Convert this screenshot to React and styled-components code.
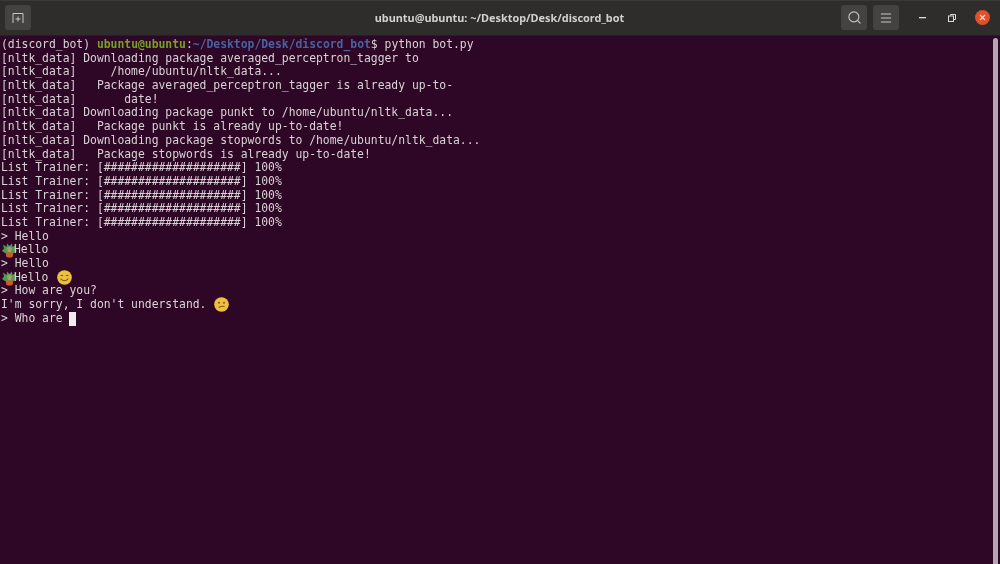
import React from "react";
import styled, { createGlobalStyle } from "styled-components";
import { Search, Menu, X } from "lucide-react";

const GlobalStyle = createGlobalStyle`
  html, body {
    margin: 0;
    padding: 0;
    height: 100%;
    overflow: hidden;
    background: #300a24;
  }
`;

const Window = styled.div`
  width: 1000px;
  height: 564px;
  display: flex;
  flex-direction: column;
  background: #2f0726;
  overflow: hidden;
`;

const TitleBar = styled.header`
  height: 36px;
  flex: none;
  box-sizing: border-box;
  display: grid;
  grid-template-columns: 1fr auto 1fr;
  align-items: center;
  padding: 0 10px 1px 5px;
  background: #2e2d2c;
  border-top: 1px solid #3a3938;
  border-bottom: 1px solid #232221;
  filter: blur(0.4px);
`;

const Side = styled.div`
  display: flex;
  align-items: center;
  justify-content: ${(p) => (p.$end ? "flex-end" : "flex-start")};
`;

const Title = styled.div`
  font-family: "Noto Sans", "Open Sans", sans-serif;
  font-size: 10.9px;
  font-weight: 700;
  color: #d2d1ce;
  position: relative;
  left: 2px;
`;

const ToolButton = styled.button`
  width: 26px;
  height: 25px;
  padding: 0;
  margin-left: ${(p) => p.$gap || 0}px;
  display: flex;
  align-items: center;
  justify-content: center;
  background: #444341;
  border: 0;
  border-radius: 3px;
  color: #c8c7c4;
`;

const WindowButton = styled.div`
  width: 18px;
  height: 18px;
  margin-left: ${(p) => p.$gap || 0}px;
  display: flex;
  align-items: center;
  justify-content: center;
  color: #dddcd9;
`;

const CloseButton = styled(WindowButton)`
  border-radius: 50%;
  width: 15px;
  height: 15px;
  background: #e0502a;
  color: #f6e4dc;
`;

const Body = styled.main`
  flex: 1;
  position: relative;
  min-height: 0;
`;

const Output = styled.pre`
  margin: 0;
  padding: 2px 0 0 1px;
  font-family: "DejaVu Sans Mono", "Liberation Mono", monospace;
  font-size: 11.39px;
  line-height: 13.7px;
  color: #d8d3d6;
  filter: blur(0.4px);
`;

const Line = styled.div`
  height: 13.7px;
  white-space: pre;
  display: flex;
  align-items: center;
`;

const Green = styled.span`
  color: #76a026;
  font-weight: 700;
`;

const Blue = styled.span`
  color: #4a62a0;
  font-weight: 700;
`;

const Glyph = styled.svg`
  flex: none;
  display: block;
  margin-left: ${(p) => p.$left || 0}px;
  margin-right: ${(p) => p.$right || 0}px;
  margin-top: ${(p) => p.$top || 0}px;
`;

const Cursor = styled.span`
  display: inline-block;
  width: 7px;
  height: 14px;
  background: #f0ecee;
`;

const ScrollThumb = styled.div`
  position: absolute;
  top: 2px;
  bottom: 0;
  right: 2px;
  width: 5px;
  border-radius: 3px 3px 0 0;
  background: #b5a6b1;
`;

const Plant = () => (
  <Glyph width="15" height="15" viewBox="0 0 15 15" $left={1} $right={-3} $top={1}>
    <path d="M1 1.5 L4.5 4 L5 .5 L7.5 3 L10 .5 L10.5 4 L14.5 1.5 L13 5.5 L15 8 L12 10 L3 10 L0 8 L2 5.5 Z" fill="#4f9a52" />
    <path d="M5 5 L7.5 3.5 L10 5 L9 9 L6 9 Z" fill="#a5a06a" />
    <path d="M3.5 9.5 L11.5 9.5 L10.5 14 Q7.5 15 4.5 14 Z" fill="#cf5a2c" />
  </Glyph>
);

const Smile = () => (
  <Glyph width="15" height="15" viewBox="0 0 15 15" $left={9}>
    <circle cx="7.5" cy="7.5" r="7.3" fill="#efc040" />
    <path d="M3.6 6 Q4.8 4.6 6 6 M9 6 Q10.2 4.6 11.4 6" fill="none" stroke="#7a5a20" strokeWidth="1.1" />
    <path d="M3.6 8.6 Q7.5 12.8 11.4 8.6" fill="none" stroke="#7a5a20" strokeWidth="1.1" />
  </Glyph>
);

const Confused = () => (
  <Glyph width="15" height="15" viewBox="0 0 15 15" $left={8}>
    <circle cx="7.5" cy="7.5" r="7.3" fill="#efc040" />
    <circle cx="5" cy="5.8" r="1" fill="#7a5a20" />
    <circle cx="10" cy="5.8" r="1" fill="#7a5a20" />
    <path d="M4.6 10.6 Q7.5 8.6 10.6 9.6" fill="none" stroke="#7a5a20" strokeWidth="1.1" />
  </Glyph>
);

const NewTabIcon = () => (
  <svg width="12" height="12" viewBox="0 0 12 12" fill="none" stroke="#c8c7c4" strokeWidth="1">
    <path d="M1 11 V1.5 H11 V11" />
    <path d="M6 4.5 V9.5 M3.5 7 H8.5" />
  </svg>
);

const RestoreIcon = () => (
  <svg width="8" height="8" viewBox="0 0 8 8" fill="none" stroke="currentColor" strokeWidth="1">
    <path d="M2.5 1.5 V.5 H7.5 V5.5 H6" />
    <rect x=".5" y="2" width="5" height="5.5" />
  </svg>
);

const bar = "List Trainer: [####################] 100%";

const logLines = [
  "[nltk_data] Downloading package averaged_perceptron_tagger to",
  "[nltk_data]     /home/ubuntu/nltk_data...",
  "[nltk_data]   Package averaged_perceptron_tagger is already up-to-",
  "[nltk_data]       date!",
  "[nltk_data] Downloading package punkt to /home/ubuntu/nltk_data...",
  "[nltk_data]   Package punkt is already up-to-date!",
  "[nltk_data] Downloading package stopwords to /home/ubuntu/nltk_data...",
  "[nltk_data]   Package stopwords is already up-to-date!",
  bar,
  bar,
  bar,
  bar,
  bar,
];

export default function App() {
  return (
    <Window>
      <GlobalStyle />
      <TitleBar>
        <Side>
          <ToolButton>
            <NewTabIcon />
          </ToolButton>
        </Side>
        <Title>ubuntu@ubuntu: ~/Desktop/Desk/discord_bot</Title>
        <Side $end>
          <ToolButton>
            <Search size={15} strokeWidth={1.8} />
          </ToolButton>
          <ToolButton $gap={6}>
            <Menu size={14} strokeWidth={1.8} />
          </ToolButton>
          <WindowButton $gap={14}>
            <svg width="7" height="2" viewBox="0 0 7 2">
              <rect width="7" height="1.3" fill="currentColor" />
            </svg>
          </WindowButton>
          <WindowButton $gap={12}>
            <RestoreIcon />
          </WindowButton>
          <CloseButton $gap={14}>
            <X size={9} strokeWidth={3} />
          </CloseButton>
        </Side>
      </TitleBar>
      <Body>
        <Output>
          <Line>
            (discord_bot) <Green>ubuntu@ubuntu</Green>:<Blue>~/Desktop/Desk/discord_bot</Blue>$ python bot.py
          </Line>
          {logLines.map((text, i) => (
            <Line key={i}>{text}</Line>
          ))}
          <Line>{"> Hello"}</Line>
          <Line>
            <Plant />
            Hello
          </Line>
          <Line>{"> Hello"}</Line>
          <Line>
            <Plant />
            Hello
            <Smile />
          </Line>
          <Line>{"> How are you?"}</Line>
          <Line>
            I'm sorry, I don't understand.
            <Confused />
          </Line>
          <Line>
            {"> Who are "}
            <Cursor />
          </Line>
        </Output>
        <ScrollThumb />
      </Body>
    </Window>
  );
}
